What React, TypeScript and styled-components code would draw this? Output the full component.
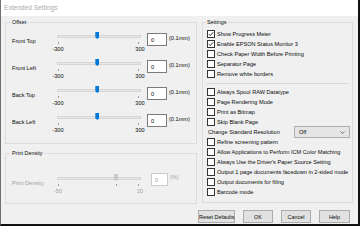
import styled, { createGlobalStyle } from 'styled-components';

const GlobalStyle = createGlobalStyle`
  html, body {
    margin: 0;
    padding: 0;
    background: #ffffff;
  }
  * {
    box-sizing: border-box;
  }
`;

const Window = styled.div`
  width: 360px;
  height: 226px;
  display: flex;
  flex-direction: column;
  background: #f0f0f0;
  border-left: 1px solid #707070;
  border-right: 2px solid #111;
  border-bottom: 2px solid #111;
  font-family: 'Liberation Sans', Arial, sans-serif;
  font-size: 5.6px;
  color: #0a0a0a;
  overflow: hidden;
`;

const TitleBar = styled.div`
  height: 16px;
  flex-shrink: 0;
  background: #ffffff;
  color: #ababab;
  font-size: 6.6px;
  padding: 4px 0 0 3px;
`;

const Body = styled.div`
  flex: 1;
  display: flex;
  flex-direction: column;
  padding: 3px 5px 0 4px;
`;

const Columns = styled.div`
  display: flex;
  gap: 5px;
`;

const LeftColumn = styled.div`
  width: 192px;
  display: flex;
  flex-direction: column;
  gap: 6px;
`;

const Group = styled.fieldset<{ $height: number }>`
  margin: 0;
  padding: 0 0 0 6px;
  height: ${({ $height }) => $height}px;
  border: 1px solid #dcdcdc;
  min-width: 0;
`;

const Legend = styled.legend`
  padding: 0 1px;
  margin-left: -1px;
  font-size: 5.4px;
  line-height: 7px;
`;

const SliderRow = styled.div<{ $top?: number }>`
  display: flex;
  height: 27px;
  margin-top: ${({ $top }) => $top ?? 0}px;
`;

const RowLabel = styled.div<{ $disabled?: boolean }>`
  width: 45px;
  padding-top: 8px;
  color: ${({ $disabled }) => ($disabled ? '#a0a0a0' : '#0a0a0a')};
`;

const SliderBox = styled.div`
  width: 84px;
  display: flex;
  flex-direction: column;
`;

const TrackArea = styled.div`
  position: relative;
  height: 11px;
  padding-top: 5px;
`;

const Track = styled.div`
  height: 3px;
  background: #e7e7e7;
  border: 1px solid #d6d6d6;
`;

const Thumb = styled.div<{ $disabled?: boolean }>`
  position: absolute;
  top: 2px;
  width: 4px;
  height: 7px;
  margin-left: -2px;
  background: ${({ $disabled }) => ($disabled ? '#c8c8c8' : '#0078d7')};
  clip-path: polygon(0 0, 100% 0, 100% 75%, 50% 100%, 0 75%);
`;

const Tick = styled.div`
  position: absolute;
  top: 12px;
  width: 1px;
  height: 2px;
  background: #a0a0a0;
`;

const Scale = styled.div<{ $disabled?: boolean }>`
  display: flex;
  justify-content: space-between;
  margin: 5px -7px 0 -7px;
  color: ${({ $disabled }) => ($disabled ? '#a0a0a0' : '#0a0a0a')};

  span {
    width: 16px;
    text-align: center;
  }
`;

const ValueBox = styled.div<{ $disabled?: boolean }>`
  width: ${({ $disabled }) => ($disabled ? 17 : 20)}px;
  height: 13px;
  margin: ${({ $disabled }) => ($disabled ? 1 : 3)}px 2px 0 ${({ $disabled }) => ($disabled ? 10 : 6)}px;
  background: #ffffff;
  border: 1px solid ${({ $disabled }) => ($disabled ? '#cccccc' : '#7a7a7a')};
  padding: 3px 0 0 3px;
  color: ${({ $disabled }) => ($disabled ? '#a0a0a0' : '#0a0a0a')};
`;

const Unit = styled.div<{ $disabled?: boolean }>`
  padding-top: ${({ $disabled }) => ($disabled ? 2 : 5)}px;
  white-space: nowrap;
  color: ${({ $disabled }) => ($disabled ? '#a0a0a0' : '#0a0a0a')};
`;

const SettingsGroup = styled(Group)`
  flex: 1;
  padding: 3px 0 0 4px;
`;

const CheckRow = styled.label`
  display: flex;
  align-items: center;
  gap: 2px;
  height: 10px;
  white-space: nowrap;
`;

const Box = styled.span`
  width: 8px;
  height: 8px;
  flex-shrink: 0;
  background: #ffffff;
  border: 1px solid #333333;
  display: flex;
  align-items: center;
  justify-content: center;
`;

const Divider = styled.div`
  height: 1px;
  background: #d8d8d8;
  margin: 4px 3px 3px -1px;
`;

const ResolutionRow = styled.div`
  display: flex;
  align-items: center;
  justify-content: space-between;
  height: 10px;
  padding-left: 1px;
  margin-right: 2px;
`;

const Select = styled.div`
  width: 56px;
  height: 12px;
  background: #e5e5e5;
  border: 1px solid #adadad;
  display: flex;
  align-items: center;
  justify-content: space-between;
  padding: 0 4px;
`;

const ButtonBar = styled.div`
  display: flex;
  justify-content: flex-end;
  gap: 8px;
  margin-top: 6px;
  padding-right: 3px;
`;

const Button = styled.button<{ $width: number }>`
  width: ${({ $width }) => $width}px;
  height: 13px;
  padding: 0;
  background: #e1e1e1;
  border: 1px solid #adadad;
  font-family: inherit;
  font-size: 5.4px;
  color: #0a0a0a;
  white-space: nowrap;
  overflow: visible;
`;

type SliderProps = {
  label: string;
  min: string;
  max: string;
  pos: number;
  ticks: number[];
  value: string;
  unit: string;
  top?: number;
  disabled?: boolean;
};

const Slider = ({ label, min, max, pos, ticks, value, unit, top, disabled }: SliderProps) => (
  <SliderRow $top={top}>
    <RowLabel $disabled={disabled}>{label}</RowLabel>
    <SliderBox>
      <TrackArea>
        <Track />
        {ticks.map((t) => (
          <Tick key={t} style={{ left: `${t}%` }} />
        ))}
        <Thumb $disabled={disabled} style={{ left: `${pos}%` }} />
      </TrackArea>
      <Scale $disabled={disabled}>
        <span>{min}</span>
        <span>{max}</span>
      </Scale>
    </SliderBox>
    <ValueBox $disabled={disabled}>{value}</ValueBox>
    <Unit $disabled={disabled}>{unit}</Unit>
  </SliderRow>
);

const Check = ({ label, checked }: { label: string; checked?: boolean }) => (
  <CheckRow>
    <Box>
      {checked && (
        <svg width="6" height="6" viewBox="0 0 6 6">
          <path d="M0.8 3.1 L2.3 4.6 L5.2 1.2" fill="none" stroke="#222" strokeWidth="0.9" />
        </svg>
      )}
    </Box>
    {label}
  </CheckRow>
);

const offsets = ['Front Top', 'Front Left', 'Back Top', 'Back Left'];

const topChecks = [
  { label: 'Show Progress Meter', checked: true },
  { label: 'Enable EPSON Status Monitor 3', checked: true },
  { label: 'Check Paper Width Before Printing' },
  { label: 'Separator Page' },
  { label: 'Remove white borders' },
];

const midChecks = ['Always Spool RAW Datatype', 'Page Rendering Mode', 'Print as Bitmap', 'Skip Blank Page'];

const bottomChecks = [
  'Refine screening pattern',
  'Allow Applications to Perform ICM Color Matching',
  "Always Use the Driver's Paper Source Setting",
  'Output 1 page documents facedown in 2-sided mode',
  'Output documents for filing',
  'Barcode mode',
];

const App = () => {
  return (
    <>
      <GlobalStyle />
      <Window>
        <TitleBar>Extended Settings</TitleBar>
        <Body>
          <Columns>
            <LeftColumn>
              <Group $height={125}>
                <Legend>Offset</Legend>
                {offsets.map((o, i) => (
                  <Slider
                    key={o}
                    label={o}
                    min="-300"
                    max="300"
                    pos={48}
                    ticks={[1, 97]}
                    value="0"
                    unit="(0.1mm)"
                    top={i === 0 ? 4 : 0}
                  />
                ))}
              </Group>
              <Group $height={54}>
                <Legend>Print Density</Legend>
                <Slider
                  label="Print Density"
                  min="-50"
                  max="20"
                  pos={70}
                  ticks={[1, 70, 97]}
                  value="0"
                  unit="(%)"
                  top={15}
                  disabled
                />
              </Group>
            </LeftColumn>
            <SettingsGroup $height={184}>
              <Legend>Settings</Legend>
              {topChecks.map((c) => (
                <Check key={c.label} label={c.label} checked={c.checked} />
              ))}
              <Divider />
              {midChecks.map((c) => (
                <Check key={c} label={c} />
              ))}
              <ResolutionRow>
                <span>Change Standard Resolution</span>
                <Select>
                  <span>Off</span>
                  <svg width="5" height="3" viewBox="0 0 5 3">
                    <path d="M0.5 0.5 L2.5 2.5 L4.5 0.5" fill="none" stroke="#444" strokeWidth="0.7" />
                  </svg>
                </Select>
              </ResolutionRow>
              {bottomChecks.map((c) => (
                <Check key={c} label={c} />
              ))}
            </SettingsGroup>
          </Columns>
          <ButtonBar>
            <Button $width={37}>Reset Defaults</Button>
            <Button $width={30}>OK</Button>
            <Button $width={30}>Cancel</Button>
            <Button $width={31}>Help</Button>
          </ButtonBar>
        </Body>
      </Window>
    </>
  );
};

export default App;
